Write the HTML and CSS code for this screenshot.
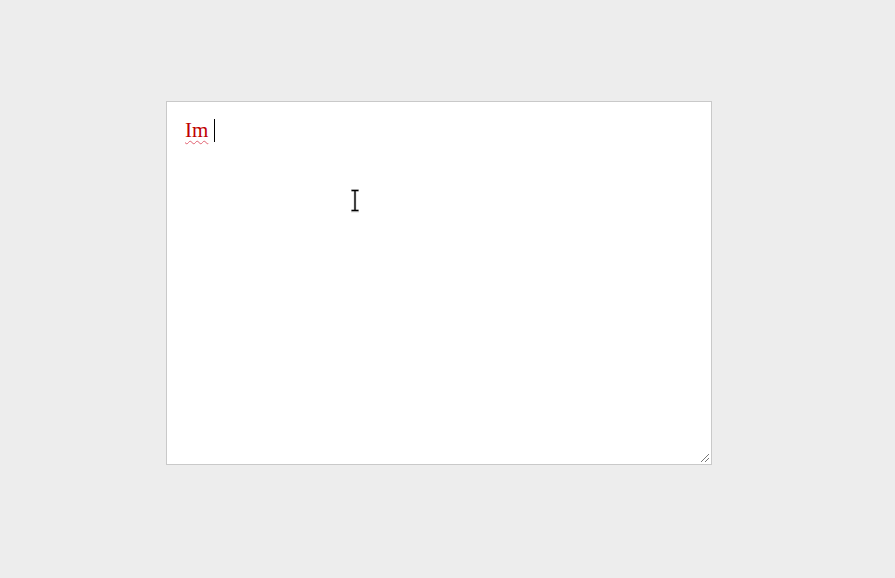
FILE: index.html
```html
<!DOCTYPE html>
<html>
<head>
<meta charset="utf-8">
<link rel="stylesheet" href="styles.css">
</head>
<body>
<div class="page">
  <div class="editor">
    <div class="content"><span class="word">Im</span> <span class="caret"></span></div>
    <svg class="grip" width="10" height="10" viewBox="0 0 10 10"><path d="M1 9 L9 1 M5 9 L9 5" stroke="#777" stroke-width="1" fill="none"/></svg>
  </div>
  <svg class="ibeam" width="12" height="24" viewBox="0 0 12 24">
    <path d="M2 1 H10 M2 22 H10 M6 1 V22" stroke="#ddd" stroke-width="3" fill="none"/>
    <path d="M2.5 1.5 H9.5 M2.5 21.5 H9.5 M6 1.5 V21.5" stroke="#000" stroke-width="1.4" fill="none"/>
  </svg>
</div>
</body>
</html>
```
FILE: styles.css
```css
html, body {
  margin: 0;
  padding: 0;
  background: #ededed;
}
.page {
  position: relative;
  width: 895px;
  height: 578px;
  padding: 101px 0 0 166px;
  box-sizing: border-box;
}
.editor {
  position: relative;
  width: 546px;
  height: 364px;
  box-sizing: border-box;
  border: 1px solid #c9c9c9;
  background: #fff;
  padding: 14px 18px;
}
.content {
  font-family: "Liberation Serif", serif;
  font-size: 21px;
  line-height: 28px;
  color: #222;
}
.word {
  color: #c00000;
  text-decoration: underline wavy #e06070;
  text-decoration-thickness: 1px;
  text-underline-offset: 3px;
}
.caret {
  display: inline-block;
  width: 1px;
  height: 23px;
  background: #000;
  vertical-align: -5px;
}
.grip {
  position: absolute;
  right: 1px;
  bottom: 1px;
}
.ibeam {
  position: absolute;
  left: 349px;
  top: 189px;
}
```
